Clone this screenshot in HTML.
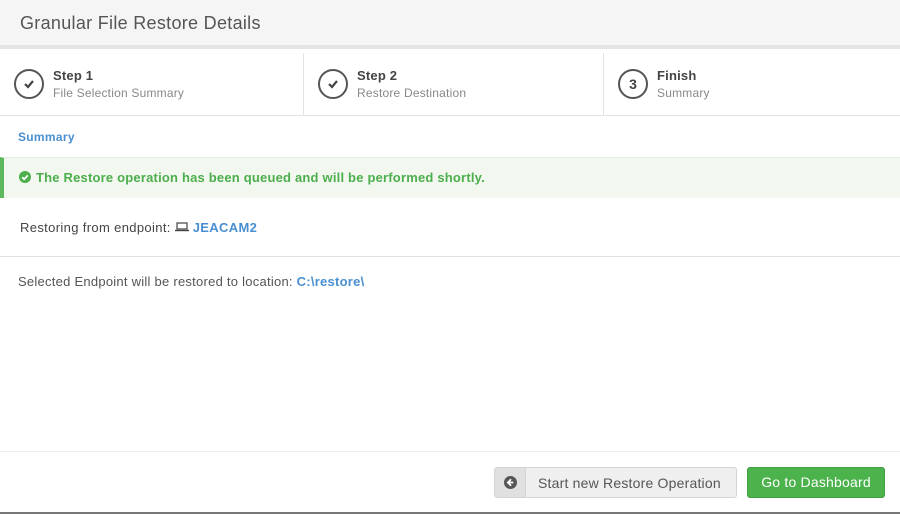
<!DOCTYPE html>
<html><head><style>
*{margin:0;padding:0;box-sizing:border-box}
body{width:900px;height:514px;overflow:hidden;background:#fff;font-family:"Liberation Sans",sans-serif;color:#444;position:relative}
.hdr{position:absolute;left:0;top:0;width:900px;height:49px;background:#f5f5f5;border-bottom:4px solid #e4e4e4}
.hdr span{position:absolute;left:20px;top:13px;font-size:18px;color:#555;letter-spacing:0.3px}
.steps{position:absolute;top:53px;left:0;width:900px;height:63px;border-bottom:1px solid #e2e2e2}
.st{position:absolute;top:0;height:62px;width:300px;border-right:1px solid #e2e2e2}
.circ{position:absolute;left:14px;top:16px;width:30px;height:30px;border:2px solid #555;border-radius:50%;font-size:14px;font-weight:bold;text-align:center;line-height:26px;color:#444}
.circ svg{position:absolute;left:7px;top:8px}
.st b{position:absolute;left:53px;top:15px;font-size:13px;font-weight:bold;color:#444;letter-spacing:0.2px}
.st i{position:absolute;left:53px;top:33px;font-size:12px;font-style:normal;color:#888;letter-spacing:0.2px}
.sum{position:absolute;left:18px;top:130px;font-size:12px;font-weight:bold;color:#4a90d0;letter-spacing:0.3px}
.alert{position:absolute;left:0;top:157px;width:900px;height:41px;background:#f2f8ef;border-left:4px solid #5cb85c;border-top:1px solid #e6eee3}
.alert span{position:absolute;left:15px;top:12px;font-size:13px;font-weight:bold;color:#4cae4c;letter-spacing:0.2px}
.t1{position:absolute;left:20px;top:220px;font-size:13px;color:#444;letter-spacing:0.35px}
.lnk{color:#4a90d0;font-weight:bold}
.hr{position:absolute;left:0;top:256px;width:900px;border-top:1px solid #e2e2e2}
.t2{position:absolute;left:18px;top:274px;font-size:13px;color:#555;letter-spacing:0.25px}
.foot{position:absolute;left:0;top:451px;width:900px;border-top:1px solid #eee}
.b1{position:absolute;left:494px;top:467px;width:243px;height:31px;border:1px solid #d4d4d4;border-radius:3px;background:#efefef;font-size:14px;color:#555}
.b1 .ic{position:absolute;left:0;top:0;width:31px;height:29px;background:#e0e0e0;border-right:1px solid #d4d4d4}
.b1 .tx{position:absolute;left:43px;top:7px;letter-spacing:0.2px}
.b2{position:absolute;left:747px;top:467px;width:138px;height:31px;border-radius:3px;background:#4cb24c;border:1px solid #44a044;color:#fff;font-size:14px;text-align:center;line-height:29px;letter-spacing:0.2px}
.bot{position:absolute;left:0;top:512px;width:900px;height:2px;background:#777}
</style></head><body>
<div class="hdr"><span>Granular File Restore Details</span></div>
<div class="steps">
<div class="st" style="left:0;width:304px"><div class="circ"><svg width="12" height="10" viewBox="0 0 12 10"><path d="M2 5l3 3 5-6" stroke="#444" stroke-width="2.2" fill="none"/></svg></div><b>Step 1</b><i>File Selection Summary</i></div>
<div class="st" style="left:304px"><div class="circ"><svg width="12" height="10" viewBox="0 0 12 10"><path d="M2 5l3 3 5-6" stroke="#444" stroke-width="2.2" fill="none"/></svg></div><b>Step 2</b><i>Restore Destination</i></div>
<div class="st" style="left:604px;border-right:none"><div class="circ">3</div><b>Finish</b><i>Summary</i></div>
</div>
<div class="sum">Summary</div>
<div class="alert"><span><svg width="12" height="12" viewBox="0 0 12 12" style="vertical-align:-1px;margin-right:5px"><circle cx="6" cy="6" r="6" fill="#4cae4c"/><path d="M3.2 6.2l2 2 3.6-3.8" stroke="#fff" stroke-width="1.8" fill="none"/></svg>The Restore operation has been queued and will be performed shortly.</span></div>
<div class="t1">Restoring from endpoint: <svg width="14" height="10" viewBox="0 0 14 10" style="vertical-align:0"><rect x="2" y="1" width="10" height="6" fill="none" stroke="#444" stroke-width="1.2"/><path d="M0 8.5h14" stroke="#444" stroke-width="1.4"/></svg> <span class="lnk">JEACAM2</span></div>
<div class="hr"></div>
<div class="t2">Selected Endpoint will be restored to location: <span class="lnk">C:\restore\</span></div>
<div class="foot"></div>
<div class="b1"><div class="ic"><svg width="13" height="13" viewBox="0 0 12 12" style="position:absolute;left:9px;top:8px"><circle cx="6" cy="6" r="6" fill="#555"/><path d="M6.5 3l-3 3 3 3M3.6 6h5" stroke="#fff" stroke-width="1.6" fill="none"/></svg></div><span class="tx">Start new Restore Operation</span></div>
<div class="b2">Go to Dashboard</div>
<div class="bot"></div>
</body></html>
